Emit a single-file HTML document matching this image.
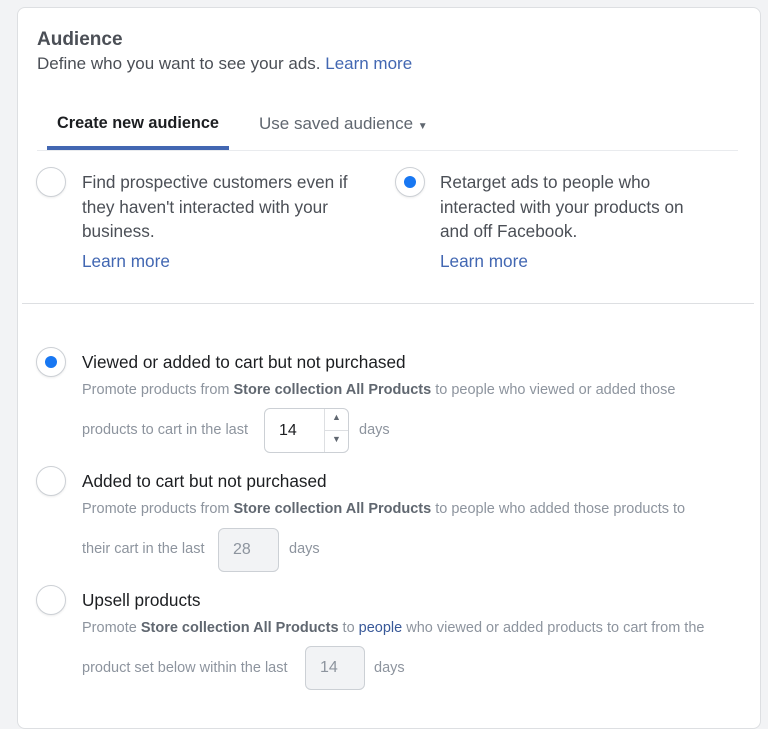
<!DOCTYPE html><html><head><style>
body{margin:0;width:768px;height:700px;overflow:hidden;background:#f2f3f5;font-family:"Liberation Sans",Arial,sans-serif;color:#1c1e21}
.card{position:absolute;left:17px;top:7px;width:742px;height:720px;background:#fff;border:1px solid #dddfe2;border-radius:8px}
.a{position:absolute;white-space:nowrap}
.r{position:absolute;width:30px;height:30px;border:1px solid #ccd0d5;border-radius:50%;background:#fff;box-sizing:border-box;box-shadow:0 1px 2px rgba(0,0,0,.08)}
.r.on::after{content:"";position:absolute;left:8px;top:8px;width:12px;height:12px;border-radius:50%;background:#1877f2}
.t{font-size:17.2px;line-height:24.5px}
.d{font-size:14.5px;color:#8d949e}
.d b{color:#606770}
.box{position:absolute;border:1px solid #ccd0d5;border-radius:6px;box-sizing:border-box;font-size:16px;color:#8d949e;background:#f2f3f5;padding-left:14px}
</style></head><body>
<div class="card"></div>
<div class="a" style="left:37px;top:29px;font-size:19px;font-weight:bold;color:#4b4f56">Audience</div>
<div class="a" style="left:37px;top:54px;font-size:17px;color:#4b4f56">Define who you want to see your ads. <span style="color:#4267b2">Learn more</span></div>
<div class="a" style="left:57px;top:114px;font-size:16.3px;font-weight:bold">Create new audience</div>
<div class="a" style="left:259px;top:114px;font-size:17px;color:#606770">Use saved audience <span style="font-size:10px">&#9660;</span></div>
<div class="a" style="left:37px;top:150px;width:701px;height:1px;background:#e9ebee"></div>
<div class="a" style="left:47px;top:146px;width:182px;height:4px;background:#4267b2"></div>
<div class="r" style="left:36px;top:167px"></div>
<div class="a t" style="left:82px;top:170px;color:#4b4f56">Find prospective customers even if<br>they haven't interacted with your<br>business.</div>
<div class="a t" style="left:82px;top:249px;color:#4267b2">Learn more</div>
<div class="r on" style="left:395px;top:167px"></div>
<div class="a t" style="left:440px;top:170px;color:#4b4f56">Retarget ads to people who<br>interacted with your products on<br>and off Facebook.</div>
<div class="a t" style="left:440px;top:249px;color:#4267b2">Learn more</div>
<div class="a" style="left:22px;top:303px;width:732px;height:1px;background:#dddfe2"></div>

<div class="r on" style="left:36px;top:347px"></div>
<div class="a t" style="left:82px;top:350px;color:#1c1e21">Viewed or added to cart but not purchased</div>
<div class="a d" style="left:82px;top:382px">Promote products from <b>Store collection All Products</b> to people who viewed or added those</div>
<div class="a d" style="left:82px;top:422px">products to cart in the last</div>
<div class="box" style="left:264px;top:408px;width:85px;height:45px;background:#fff;color:#1c1e21;line-height:43px">14</div>
<div class="a" style="left:324px;top:409px;width:1px;height:43px;background:#dddfe2"></div>
<div class="a" style="left:325px;top:430px;width:23px;height:1px;background:#dddfe2"></div>
<div class="a" style="left:332px;top:412px;font-size:9px;color:#606770">&#9650;</div>
<div class="a" style="left:332px;top:434px;font-size:9px;color:#606770">&#9660;</div>
<div class="a d" style="left:359px;top:422px">days</div>

<div class="r" style="left:36px;top:466px"></div>
<div class="a t" style="left:82px;top:469px">Added to cart but not purchased</div>
<div class="a d" style="left:82px;top:501px">Promote products from <b>Store collection All Products</b> to people who added those products to</div>
<div class="a d" style="left:82px;top:541px">their cart in the last</div>
<div class="box" style="left:218px;top:528px;width:61px;height:44px;line-height:42px">28</div>
<div class="a d" style="left:289px;top:541px">days</div>

<div class="r" style="left:36px;top:585px"></div>
<div class="a t" style="left:82px;top:588px">Upsell products</div>
<div class="a d" style="left:82px;top:620px">Promote <b>Store collection All Products</b> to <span style="color:#385898">people</span> who viewed or added products to cart from the</div>
<div class="a d" style="left:82px;top:660px">product set below within the last</div>
<div class="box" style="left:305px;top:646px;width:60px;height:44px;line-height:42px">14</div>
<div class="a d" style="left:374px;top:660px">days</div>
</body></html>
